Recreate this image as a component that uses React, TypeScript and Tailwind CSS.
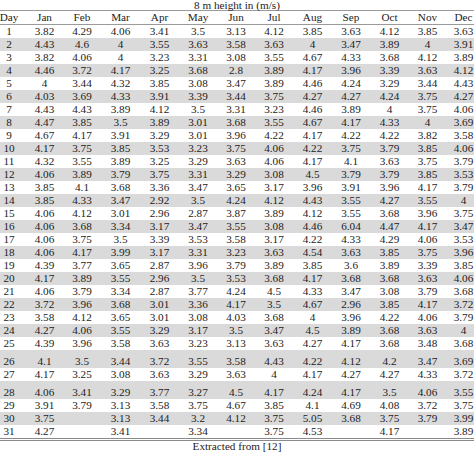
import React from "react";

const months = ["Jan", "Feb", "Mar", "Apr", "May", "Jun", "Jul", "Aug", "Sep", "Oct", "Nov", "Dec"];

const data: string[][] = [
  ["3.82", "4.29", "4.06", "3.41", "3.5", "3.13", "4.12", "3.85", "3.63", "4.12", "3.85", "3.63"],
  ["4.43", "4.6", "4", "3.55", "3.63", "3.58", "3.63", "4", "3.47", "3.89", "4", "3.91"],
  ["3.82", "4.06", "4", "3.23", "3.31", "3.08", "3.55", "4.67", "4.33", "3.68", "4.12", "3.89"],
  ["4.46", "3.72", "4.17", "3.25", "3.68", "2.8", "3.89", "4.17", "3.96", "3.39", "3.63", "4.12"],
  ["4", "3.44", "4.32", "3.85", "3.08", "3.47", "3.89", "4.46", "4.24", "3.29", "3.44", "4.43"],
  ["4.03", "3.69", "4.33", "3.91", "3.39", "3.44", "3.75", "4.27", "4.27", "4.24", "3.75", "4.27"],
  ["4.43", "4.43", "3.89", "4.12", "3.5", "3.31", "3.23", "4.46", "3.89", "4", "3.75", "4.06"],
  ["4.47", "3.85", "3.5", "3.89", "3.01", "3.68", "3.55", "4.67", "4.17", "4.33", "4", "3.69"],
  ["4.67", "4.17", "3.91", "3.29", "3.01", "3.96", "4.22", "4.17", "4.22", "4.22", "3.82", "3.58"],
  ["4.17", "3.75", "3.85", "3.53", "3.23", "3.75", "4.06", "4.22", "3.75", "3.79", "3.85", "4.06"],
  ["4.32", "3.55", "3.89", "3.25", "3.29", "3.63", "4.06", "4.17", "4.1", "3.63", "3.75", "3.79"],
  ["4.06", "3.89", "3.79", "3.75", "3.31", "3.29", "3.08", "4.5", "3.79", "3.79", "3.85", "3.53"],
  ["3.85", "4.1", "3.68", "3.36", "3.47", "3.65", "3.17", "3.96", "3.91", "3.96", "4.17", "3.79"],
  ["3.85", "4.33", "3.47", "2.92", "3.5", "4.24", "4.12", "4.43", "3.55", "4.27", "3.55", "4"],
  ["4.06", "4.12", "3.01", "2.96", "2.87", "3.87", "3.89", "4.12", "3.55", "3.68", "3.96", "3.75"],
  ["4.06", "3.68", "3.34", "3.17", "3.47", "3.55", "3.08", "4.46", "6.04", "4.47", "4.17", "3.47"],
  ["4.06", "3.75", "3.5", "3.39", "3.53", "3.58", "3.17", "4.22", "4.33", "4.29", "4.06", "3.53"],
  ["4.06", "4.17", "3.99", "3.17", "3.31", "3.23", "3.63", "4.54", "3.63", "3.85", "3.75", "3.96"],
  ["4.39", "3.77", "3.65", "2.87", "3.96", "3.79", "3.89", "3.85", "3.6", "3.89", "3.39", "3.85"],
  ["4.17", "3.89", "3.55", "2.96", "3.5", "3.53", "3.68", "4.17", "3.68", "3.68", "3.63", "4.06"],
  ["4.06", "3.79", "3.34", "2.87", "3.77", "4.24", "4.5", "4.33", "3.47", "3.08", "3.79", "3.68"],
  ["3.72", "3.96", "3.68", "3.01", "3.36", "4.17", "3.5", "4.67", "2.96", "3.85", "4.17", "3.72"],
  ["3.58", "4.12", "3.65", "3.01", "3.08", "4.03", "3.68", "4", "3.96", "4.22", "4.06", "3.79"],
  ["4.27", "4.06", "3.55", "3.29", "3.17", "3.5", "3.47", "4.5", "3.89", "3.68", "3.63", "4"],
  ["4.39", "3.96", "3.58", "3.63", "3.23", "3.13", "3.63", "4.27", "4.17", "3.68", "3.48", "3.68"],
  ["4.1", "3.5", "3.44", "3.72", "3.55", "3.58", "4.43", "4.22", "4.12", "4.2", "3.47", "3.69"],
  ["4.17", "3.25", "3.08", "3.63", "3.29", "3.63", "4", "4.17", "4.27", "4.27", "4.33", "3.72"],
  ["4.06", "3.41", "3.29", "3.77", "3.27", "4.5", "4.17", "4.24", "4.17", "3.5", "4.06", "3.55"],
  ["3.91", "3.79", "3.13", "3.58", "3.75", "4.67", "3.85", "4.1", "4.69", "4.08", "3.72", "3.75"],
  ["3.75", "", "3.13", "3.44", "3.2", "4.12", "3.75", "5.05", "3.68", "3.75", "3.79", "3.99"],
  ["4.27", "", "3.41", "", "3.34", "", "3.75", "4.53", "", "4.17", "", "3.89"],
];

const gridCols =
  "grid grid-cols-[34px_37px_38px_39px_39px_38px_38px_38px_39px_38px_39px_37px_35px] ml-[-8px] w-[489px]";

export default function App() {
  return (
    <div
      className="w-[474px] h-[452px] overflow-hidden bg-white text-[#1c1c1c] text-[11.2px]"
      style={{ fontFamily: '"Liberation Serif", "Times New Roman", serif' }}
    >
      <div className="h-[11px] leading-[11px] text-center border-b border-[#9a9a9a]">
        8 m height in (m/s)
      </div>
      <div className={`${gridCols} h-[13px] leading-[13px] border-b border-[#9a9a9a] box-content`}>
        <div className="text-center">Day</div>
        {months.map((m) => (
          <div key={m} className="text-center">
            {m}
          </div>
        ))}
      </div>
      <div className="w-[474px]">
        {data.map((row, i) => {
          const day = i + 1;
          const gray = day % 2 === 0;
          const tall = day === 26 || day === 28;
          return (
            <div
              key={day}
              className={`${gray ? "bg-[#dadada]" : "bg-white"} ${tall ? "h-[18px] pt-[5px]" : "h-[13px]"}`}
            >
              <div className={`${gridCols} h-[13px] leading-[13px]`}>
                <div className="text-center">{day}</div>
                {row.map((v, j) => (
                  <div key={j} className="text-center">
                    {v}
                  </div>
                ))}
              </div>
            </div>
          );
        })}
      </div>
      <div className="h-[3px] border-t border-b border-[#8a8a8a]" />
      <div className="h-[11px] leading-[11px] text-center mt-[0px]">Extracted from [12]</div>
    </div>
  );
}
